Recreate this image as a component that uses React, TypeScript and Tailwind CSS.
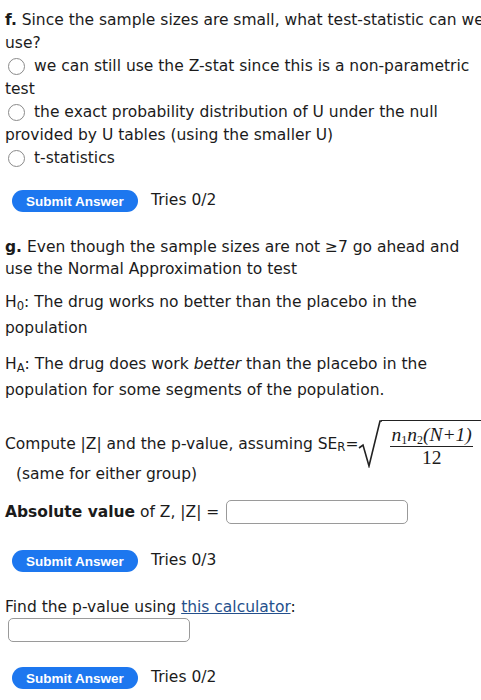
import React from 'react';

const font = { fontFamily: '"DejaVu Sans", Verdana, sans-serif' };

function Radio({ children }: { children: React.ReactNode }) {
  return (
    <div>
      <span className="mr-[9px] ml-[3px] inline-block h-[17px] w-[17px] translate-y-[3px] rounded-full border-[1.5px] border-[#8a8a8a] bg-white align-top" />
      {children}
    </div>
  );
}

function SubmitRow({ tries }: { tries: string }) {
  return (
    <div className="flex items-center gap-[13px] pl-[7px]">
      <button className="h-[22px] w-[126px] rounded-full bg-[#1d77ef] text-[13.5px] font-bold text-white [font-family:'Liberation_Sans',Arial,sans-serif]">
        Submit Answer
      </button>
      <span className="text-[15.5px]">Tries {tries}</span>
    </div>
  );
}

function SqrtFormula() {
  return (
    <span className="inline-flex h-[48px] items-start">
      <svg width="24" height="48" viewBox="0 0 24 48" className="-mr-[1px] shrink-0">
        <path d="M1 28 L5 25 L11 46 L22 1 L24 1" fill="none" stroke="#222" strokeWidth="1.6" />
      </svg>
      <span
        className="flex flex-col items-center border-t-[1.5px] border-[#222] pl-[9px] pr-[8px] pt-[3px] text-[19.5px] leading-[21px]"
        style={{ fontFamily: '"Liberation Serif", "Times New Roman", serif' }}
      >
        <span className="border-b-[1.5px] border-[#222] px-[1px] pb-[1px] italic">
          n<sub className="text-[12px] not-italic">1</sub>n<sub className="text-[12px] not-italic">2</sub>(N+1)
        </span>
        <span>12</span>
      </span>
    </span>
  );
}

export default function App() {
  return (
    <div className="w-[481px] overflow-hidden bg-white pl-[5px] pt-[9px] text-[15.5px] leading-[23px] text-[#1b1b1b]" style={font}>
      <p className="w-[480px]">
        <b>f.</b> Since the sample sizes are small, what test-statistic can we use?
      </p>
      <div className="w-[470px]">
        <Radio>we can still use the Z-stat since this is a non-parametric test</Radio>
        <Radio>the exact probability distribution of U under the null provided by U tables (using the smaller U)</Radio>
        <Radio>t-statistics</Radio>
      </div>

      <div className="mt-[19px]">
        <SubmitRow tries="0/2" />
      </div>

      <p className="mt-[24px] w-[470px] leading-[22px]">
        <b>g.</b> Even though the sample sizes are not ≥7 go ahead and use the Normal Approximation to test
      </p>

      <p className="mt-[9px] w-[440px] leading-[26px]">
        H<sub>0</sub>: The drug works no better than the placebo in the population
      </p>
      <p className="mt-[10px] w-[450px] leading-[26px]">
        H<sub>A</sub>: The drug does work <i>better</i> than the placebo in the population for some segments of the population.
      </p>

      <div className="mt-[17px] flex h-[48px] items-center whitespace-nowrap">
        <span>
          Compute |Z| and the p-value, assuming SE<sub>R</sub>=
        </span>
        <SqrtFormula />
      </div>
      <p className="-mt-[5px] pl-[11px]">(same for either group)</p>

      <div className="mt-[14px] flex h-[24px] items-center">
        <span>
          <b>Absolute value</b> of Z, |Z| =&nbsp;
        </span>
        <input className="ml-[2px] h-[24px] w-[182px] rounded-[5px] border-[1.5px] border-[#9a9a9a] bg-white outline-none" />
      </div>

      <div className="mt-[25px]">
        <SubmitRow tries="0/3" />
      </div>

      <p className="mt-[24px]">
        Find the p-value using{' '}
        <a href="#" className="text-[#25508c] underline">
          this calculator
        </a>
        :
      </p>
      <input className="ml-[3px] -mt-[1px] block h-[24px] w-[182px] rounded-[5px] border-[1.5px] border-[#9a9a9a] bg-white outline-none" />

      <div className="mt-[24px] pb-[12px]">
        <SubmitRow tries="0/2" />
      </div>
    </div>
  );
}
